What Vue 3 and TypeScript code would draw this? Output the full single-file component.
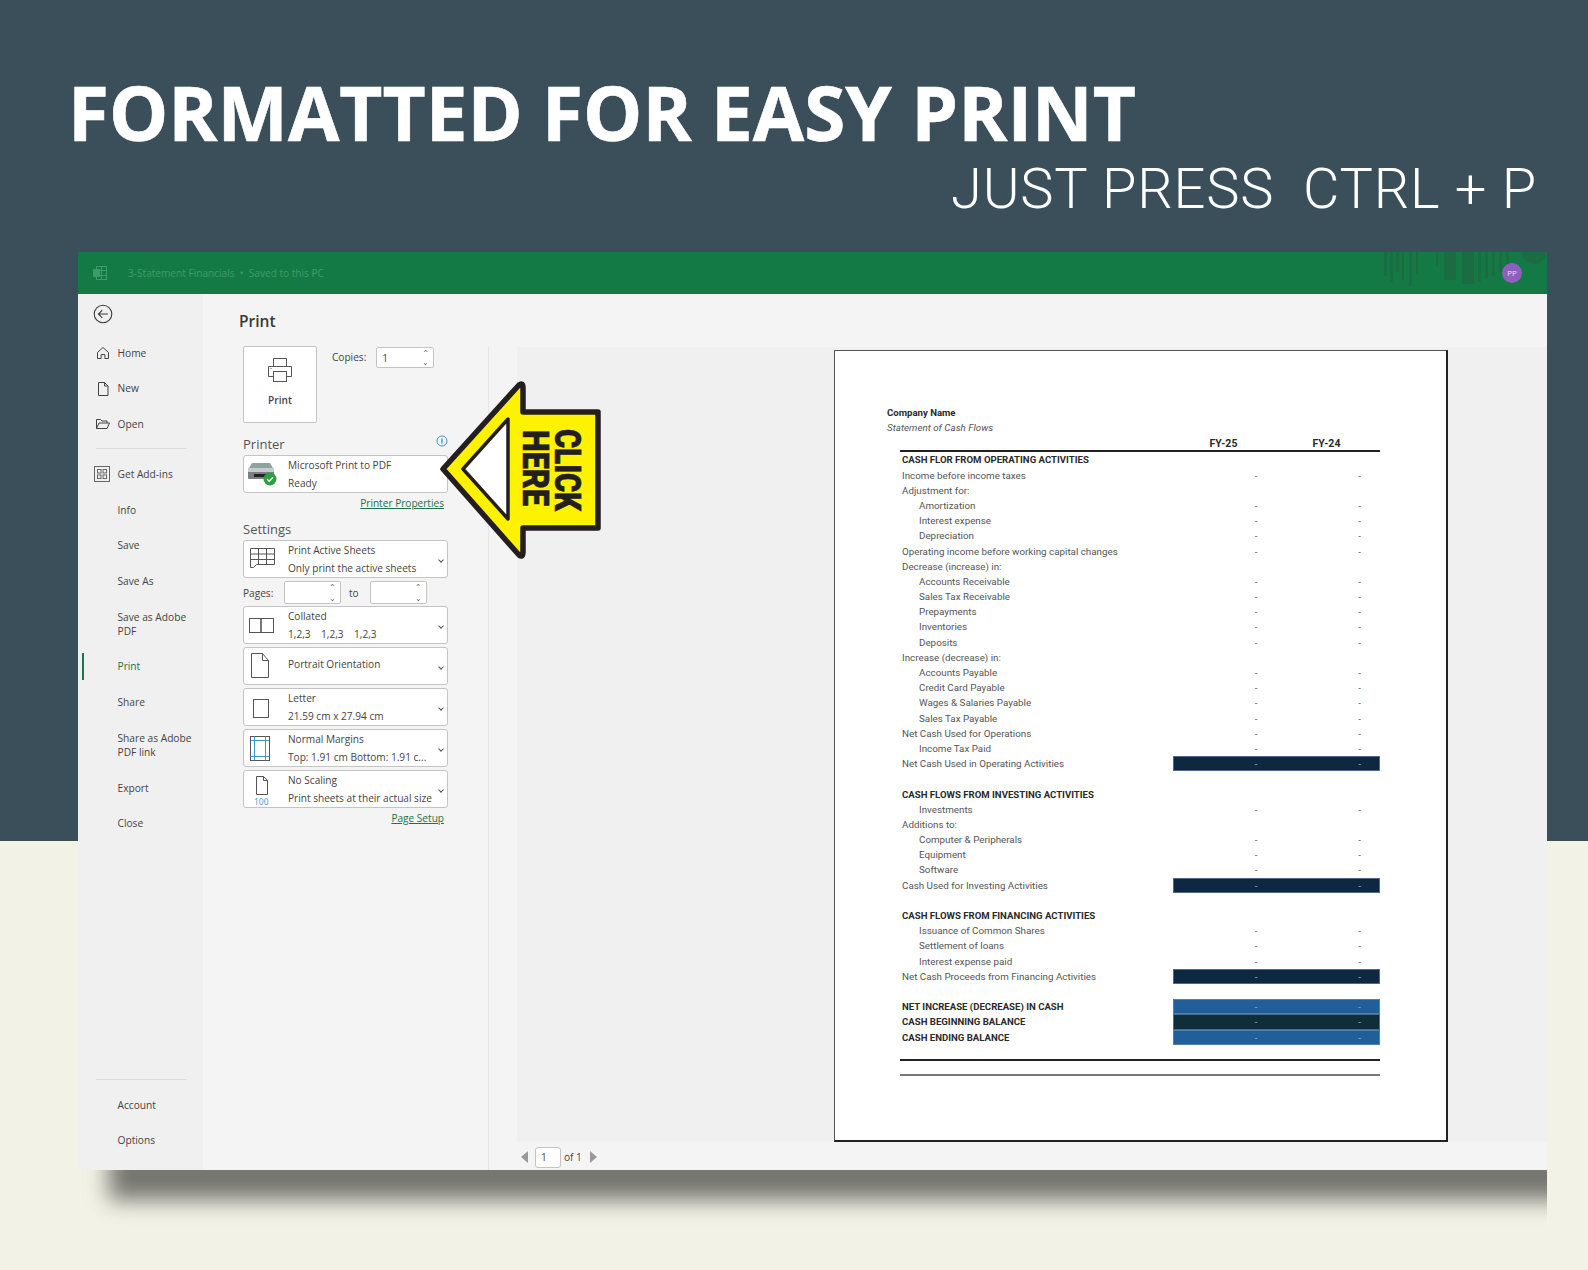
<script setup lang="ts">
interface SheetRow {
	label: string;
	kind?: "head" | "total" | "blank";
	indent?: boolean;
	dash?: boolean;
	bar?: "navy" | "blue" | "teal";
}

interface PrintOption {
	icon: string;
	name: string;
	sub?: string;
}

const navTop = ["Home", "New", "Open"];
const navMid = [
	"Get Add-ins",
	"Info",
	"Save",
	"Save As",
	"Save as Adobe PDF",
	"Print",
	"Share",
	"Share as Adobe PDF link",
	"Export",
	"Close",
];

const optionsA: PrintOption[] = [
	{ icon: "sheet", name: "Print Active Sheets", sub: "Only print the active sheets" },
];
const optionsB: PrintOption[] = [
	{ icon: "collate", name: "Collated", sub: "1,2,3    1,2,3    1,2,3" },
	{ icon: "portrait", name: "Portrait Orientation" },
	{ icon: "letter", name: "Letter", sub: "21.59 cm x 27.94 cm" },
	{ icon: "margins", name: "Normal Margins", sub: "Top: 1.91 cm Bottom: 1.91 c..." },
	{ icon: "scaling", name: "No Scaling", sub: "Print sheets at their actual size" },
];

const rows: SheetRow[] = [
	{ label: "CASH FLOR FROM OPERATING ACTIVITIES", kind: "head" },
	{ label: "Income before income taxes", dash: true },
	{ label: "Adjustment for:" },
	{ label: "Amortization", indent: true, dash: true },
	{ label: "Interest expense", indent: true, dash: true },
	{ label: "Depreciation", indent: true, dash: true },
	{ label: "Operating income before working capital changes", dash: true },
	{ label: "Decrease (increase) in:" },
	{ label: "Accounts Receivable", indent: true, dash: true },
	{ label: "Sales Tax Receivable", indent: true, dash: true },
	{ label: "Prepayments", indent: true, dash: true },
	{ label: "Inventories", indent: true, dash: true },
	{ label: "Deposits", indent: true, dash: true },
	{ label: "Increase (decrease) in:" },
	{ label: "Accounts Payable", indent: true, dash: true },
	{ label: "Credit Card Payable", indent: true, dash: true },
	{ label: "Wages & Salaries Payable", indent: true, dash: true },
	{ label: "Sales Tax Payable", indent: true, dash: true },
	{ label: "Net Cash Used for Operations", dash: true },
	{ label: "Income Tax Paid", indent: true, dash: true },
	{ label: "Net Cash Used in Operating Activities", dash: true, bar: "navy" },
	{ label: "", kind: "blank" },
	{ label: "CASH FLOWS FROM INVESTING ACTIVITIES", kind: "head" },
	{ label: "Investments", indent: true, dash: true },
	{ label: "Additions to:" },
	{ label: "Computer & Peripherals", indent: true, dash: true },
	{ label: "Equipment", indent: true, dash: true },
	{ label: "Software", indent: true, dash: true },
	{ label: "Cash Used for Investing Activities", dash: true, bar: "navy" },
	{ label: "", kind: "blank" },
	{ label: "CASH FLOWS FROM FINANCING ACTIVITIES", kind: "head" },
	{ label: "Issuance of Common Shares", indent: true, dash: true },
	{ label: "Settlement of loans", indent: true, dash: true },
	{ label: "Interest expense paid", indent: true, dash: true },
	{ label: "Net Cash Proceeds from Financing Activities", dash: true, bar: "navy" },
	{ label: "", kind: "blank" },
	{ label: "NET INCREASE (DECREASE) IN CASH", kind: "head", dash: true, bar: "blue" },
	{ label: "CASH BEGINNING BALANCE", kind: "head", dash: true, bar: "teal" },
	{ label: "CASH ENDING BALANCE", kind: "head", dash: true, bar: "blue" },
];

const stripes = [
	[0, 3, 24], [6, 3, 30], [12, 3, 20], [18, 2, 28], [25, 3, 34], [32, 2, 22],
	[52, 2, 14], [60, 12, 28], [78, 12, 32], [94, 3, 30], [101, 3, 26], [108, 3, 24], [115, 3, 20], [122, 3, 14],
];
</script>

<template>
	<div class="page">
		<header class="hero">
			<h1 class="hero-title">FORMATTED FOR EASY PRINT</h1>
			<p class="hero-sub">JUST PRESS&nbsp; CTRL + P</p>
		</header>

		<section class="window">
			<div class="titlebar">
				<svg class="xl-icon" width="16" height="16" viewBox="0 0 16 16" fill="none" stroke="#3f9a68" stroke-width="1">
					<rect x="4.5" y="1.5" width="10" height="13" />
					<path d="M4.5 5.5h10M4.5 10.5h10M9.5 1.5v13" />
					<rect x="1" y="4" width="7" height="8" fill="#3f9a68" stroke="none" />
				</svg>
				<span class="doc-title">3-Statement Financials &nbsp;•&nbsp; Saved to this PC</span>
				<div class="deco">
					<i v-for="(s, i) in stripes" :key="i" class="stripe" :style="{ left: s[0] + 'px', width: s[1] + 'px', height: s[2] + 'px' }"></i>
				</div>
				<span class="deco-arc"></span>
				<span class="avatar">PP</span>
			</div>

			<div class="body">
				<nav class="nav">
					<svg class="back" width="20" height="20" viewBox="0 0 20 20" fill="none" stroke="#3d3d3d" stroke-width="1.1">
						<circle cx="10" cy="10" r="8.8" />
						<path d="M15 10H5.5M9.3 6.2 5.4 10l3.9 3.8" />
					</svg>

					<a v-for="item in navTop" :key="item" class="nav-item">
						<svg v-if="item === 'Home'" class="nav-icon" width="16" height="16" viewBox="0 0 16 16" fill="none" stroke="#444" stroke-width="1">
							<path d="M2.5 7.5 8 2.5l5.5 5v6h-3.6V9.6H6.1v3.9H2.5z" />
						</svg>
						<svg v-else-if="item === 'New'" class="nav-icon" width="16" height="16" viewBox="0 0 16 16" fill="none" stroke="#444" stroke-width="1">
							<path d="M3.5 1.5h6l3.5 3.5v9.5H3.5zM9.5 1.5V5H13" />
						</svg>
						<svg v-else class="nav-icon" width="16" height="16" viewBox="0 0 16 16" fill="none" stroke="#444" stroke-width="1">
							<path d="M1.5 12.5v-9h4l1.5 1.5h5v2M1.5 12.5l2.5-5.5h10.5l-2.5 5.5z" />
						</svg>
						{{ item }}
					</a>

					<hr class="nav-sep" />

					<a v-for="item in navMid" :key="item" class="nav-item" :class="{ 'nav-item--active': item === 'Print', 'nav-item--two': item.length > 14 }">
						<svg v-if="item === 'Get Add-ins'" class="nav-icon nav-icon--wide" width="16" height="16" viewBox="0 0 16 16" fill="none" stroke="#666" stroke-width="1">
							<rect x="0.5" y="0.5" width="15" height="15" />
							<rect x="3.5" y="3.5" width="3.5" height="3.5" />
							<rect x="9" y="3.5" width="3.5" height="3.5" />
							<rect x="3.5" y="9" width="3.5" height="3.5" />
							<rect x="9" y="9" width="3.5" height="3.5" />
						</svg>
						<span class="nav-label">{{ item }}</span>
					</a>

					<div class="nav-bottom">
						<hr class="nav-sep" />
						<a class="nav-item">Account</a>
						<a class="nav-item">Options</a>
					</div>
				</nav>

				<div class="panel">
					<h2 class="panel-title">Print</h2>

					<div class="print-row">
						<button class="print-btn">
							<svg width="28" height="28" viewBox="0 0 28 28" fill="none" stroke="#555" stroke-width="1">
								<path d="M7.5 10.5v-8h13v8" />
								<path d="M7.5 20.5h-5v-10h23v10h-5" />
								<rect x="7.5" y="15.5" width="13" height="10" />
								<path d="M4.5 12.5h1" />
							</svg>
							<span>Print</span>
						</button>
						<label class="copies">Copies:</label>
						<div class="spin spin--copies">
							<span class="spin-value">1</span>
							<span class="spin-arrows"><b>⌃</b><b class="down">⌃</b></span>
						</div>
					</div>

					<div class="group-head">
						<h3 class="group-title">Printer</h3>
						<svg class="info" width="12" height="12" viewBox="0 0 12 12" fill="none" stroke="#3f97d2" stroke-width="1">
							<circle cx="6" cy="6" r="5" />
							<path d="M6 3.4v5.2" stroke-width="1.4" />
						</svg>
					</div>
					<div class="select">
						<svg class="select-icon" width="30" height="26" viewBox="0 0 30 26">
							<path d="M2 8 5 3h18l3 5z" fill="#8fa3a0" />
							<rect x="1" y="8" width="26" height="11" rx="1" fill="#7a8082" />
							<rect x="1" y="8" width="26" height="4" fill="#c6ccc9" />
							<rect x="7" y="14" width="14" height="3" fill="#1f2426" />
							<circle cx="23" cy="19" r="6.5" fill="#2e9e3f" />
							<path d="m20 19 2.2 2.2 3.8-4" fill="none" stroke="#fff" stroke-width="1.4" />
						</svg>
						<div class="select-text">
							<span>Microsoft Print to PDF</span>
							<span>Ready</span>
						</div>
					</div>
					<a class="link">Printer Properties</a>

					<h3 class="group-title group-title--settings">Settings</h3>
					<div v-for="opt in optionsA" :key="opt.name" class="select">
						<svg class="select-icon" width="30" height="26" viewBox="0 0 30 26" fill="none" stroke="#555" stroke-width="1">
							<path d="M3.5 3.5h24v16h-18l-3 3h-3zM3.5 9h24M3.5 14.5h24M11.5 3.5v16M19.5 3.5v16" />
						</svg>
						<div class="select-text">
							<span>{{ opt.name }}</span>
							<span>{{ opt.sub }}</span>
						</div>
						<span class="caret"></span>
					</div>

					<div class="pages">
						<span class="pages-label">Pages:</span>
						<div class="spin spin--pages">
							<span class="spin-value"></span>
							<span class="spin-arrows"><b>⌃</b><b class="down">⌃</b></span>
						</div>
						<span class="pages-to">to</span>
						<div class="spin spin--pages">
							<span class="spin-value"></span>
							<span class="spin-arrows"><b>⌃</b><b class="down">⌃</b></span>
						</div>
					</div>

					<div class="select-stack">
						<div v-for="opt in optionsB" :key="opt.name" class="select">
							<svg class="select-icon" width="30" height="28" viewBox="0 0 30 28" fill="none" stroke="#555" stroke-width="1">
								<template v-if="opt.icon === 'collate'">
									<rect x="2.5" y="7.5" width="24" height="14" />
									<path d="M14 7v15" stroke-width="1.6" />
								</template>
								<template v-else-if="opt.icon === 'portrait'">
									<path d="M4.5 1.5h11l6 7v17h-17zM15.5 1.5v7h6" />
								</template>
								<template v-else-if="opt.icon === 'letter'">
									<rect x="6.5" y="6.5" width="15" height="18" />
								</template>
								<template v-else-if="opt.icon === 'margins'">
									<rect x="3.5" y="2.5" width="19" height="24" />
									<path d="M3.5 6.5h19M3.5 22.5h19M7.5 2.5v24M18.5 2.5v24" stroke="#3f97d2" />
								</template>
								<template v-else>
									<path d="M9.5 1.5h7l4 4v14h-11zM16.5 1.5v4h4" />
								</template>
							</svg>
							<span v-if="opt.icon === 'scaling'" class="scale-100">100</span>
							<div class="select-text" :class="{ 'select-text--one': !opt.sub }">
								<span>{{ opt.name }}</span>
								<span v-if="opt.sub" class="keep-space">{{ opt.sub }}</span>
							</div>
							<span class="caret"></span>
						</div>
					</div>
					<a class="link">Page Setup</a>
				</div>

				<div class="preview">
					<div class="preview-canvas">
						<div class="sheet">
							<p class="company">Company Name</p>
							<p class="statement">Statement of Cash Flows</p>
							<div class="table">
								<div class="row row--years">
									<span class="cell-label"></span>
									<span class="cell-year">FY-25</span>
									<span class="cell-year">FY-24</span>
								</div>
								<div
									v-for="(r, i) in rows"
									:key="i"
									class="row"
									:class="{ 'row--head': r.kind === 'head', 'row--indent': r.indent }"
								>
									<span class="cell-label">{{ r.label }}</span>
									<div class="cells" :class="r.bar ? 'cells--' + r.bar : ''">
										<span class="cell-dash">{{ r.dash ? "-" : "" }}</span>
										<span class="cell-dash">{{ r.dash ? "-" : "" }}</span>
									</div>
								</div>
								<div class="rule rule--dark"></div>
								<div class="rule rule--gray"></div>
							</div>
						</div>
					</div>
					<div class="pager">
						<span class="tri tri--left"></span>
						<span class="pager-box">1</span>
						<span class="pager-of">of 1</span>
						<span class="tri tri--right"></span>
					</div>
				</div>
			</div>

			<!-- callout over the printer dropdown -->
			<svg class="callout" width="168" height="184" viewBox="0 0 168 184">
				<path
					d="M5 91 81 7Q85 4 85 10V34H160V150H85V174Q85 180 81 177Z"
					fill="#fff200"
					stroke="#231f20"
					stroke-width="5.5"
					stroke-linejoin="round"
				/>
				<path d="M25 91 70 41V141Z" fill="#fff" stroke="#231f20" stroke-width="3.5" stroke-linejoin="round" />
				<text class="callout-text" transform="translate(117 51) rotate(90)" textLength="82" lengthAdjust="spacingAndGlyphs">CLICK</text>
				<text class="callout-text" transform="translate(85 52) rotate(90)" textLength="76" lengthAdjust="spacingAndGlyphs">HERE</text>
			</svg>

			<div class="shadow-clip"><div class="shadow"></div></div>
		</section>
	</div>
</template>

<style>
html,
body {
	margin: 0;
	background: #f2f2e6;
}
</style>

<style scoped>
.page {
	width: 1588px;
	height: 1270px;
	overflow: hidden;
	background: linear-gradient(#3a4f5a 0 841px, #f2f2e6 841px);
	font-family: "Open Sans", "Liberation Sans", sans-serif;
}

.hero {
	height: 252px;
	box-sizing: border-box;
	padding: 64px 51px 0 68px;
	color: #fff;
}

.hero-title {
	margin: 0;
	font-size: 74.6px;
	line-height: 96px;
	font-weight: 700;
	-webkit-text-stroke: 0.6px #fff;
	white-space: nowrap;
}

.hero-sub {
	margin: -11px 0 0;
	font-family: Roboto, "Liberation Sans", sans-serif;
	font-size: 56px;
	line-height: 80px;
	font-weight: 300;
	letter-spacing: 0.8px;
	text-align: right;
	white-space: nowrap;
}

.window {
	position: relative;
	margin-left: 78px;
	width: 1469px;
	height: 918px;
	font-size: 10.1px;
	color: #444;
}

.titlebar {
	position: relative;
	height: 42px;
	background: #147a45;
	display: flex;
	align-items: center;
	padding-left: 14px;
}

.xl-icon {
	flex: none;
}

.doc-title {
	margin-left: 20px;
	color: #3f9a68;
	font-size: 10.1px;
}

.deco {
	position: absolute;
	left: 1306px;
	top: 0;
	width: 140px;
	height: 42px;
}

.stripe {
	position: absolute;
	top: 0;
	background: #1c6c43;
}

.deco-arc {
	position: absolute;
	left: 1444px;
	top: -12px;
	width: 24px;
	height: 24px;
	border-radius: 50%;
	background: #1c6c43;
	clip-path: inset(12px 0 0 0);
}

.avatar {
	position: absolute;
	left: 1424px;
	top: 11px;
	width: 20px;
	height: 20px;
	border-radius: 50%;
	background: #8f5fc0;
	color: #e9def5;
	font-size: 8px;
	line-height: 20px;
	text-align: center;
}

.body {
	display: grid;
	grid-template-columns: 125px 286px 1fr;
	height: 876px;
	background: #f4f4f4;
}

.nav {
	background: #f0f0f0;
	display: flex;
	flex-direction: column;
	padding-top: 10px;
	position: relative;
	font-size: 10.2px;
}

.back {
	margin: 0 0 11px 15px;
	flex: none;
}

.nav-item {
	position: relative;
	min-height: 35.6px;
	display: flex;
	align-items: center;
	padding-left: 39.5px;
	padding-right: 6px;
	line-height: 14px;
	flex: none;
}

.nav-item--two {
	min-height: 50px;
}

.nav-item--active {
	color: #217346;
}

.nav-item--active::before {
	content: "";
	position: absolute;
	left: 4px;
	top: 4px;
	bottom: 4px;
	width: 2px;
	background: #217346;
}

.nav-icon {
	position: absolute;
	left: 17px;
	top: 10px;
}

.nav-icon--wide {
	left: 16px;
}

.nav-sep {
	margin: 6px 16px 7.5px 18px;
	border: 0;
	height: 1px;
	background: #dcdcdc;
}

.nav-bottom {
	margin-top: auto;
	padding-bottom: 12px;
}

.nav-bottom .nav-sep {
	margin-bottom: 7px;
}

.panel {
	position: relative;
	padding: 16px 41px 0 40px;
	display: flex;
	flex-direction: column;
}

.panel::after {
	content: "";
	position: absolute;
	right: 0;
	top: 52px;
	bottom: 0;
	width: 1px;
	background: #e6e6e6;
}

.panel-title {
	margin: 0 0 0 -4px;
	font-size: 15.5px;
	line-height: 22px;
	font-weight: 600;
	color: #3a3a3a;
}

.print-row {
	display: flex;
	align-items: flex-start;
	margin-top: 14px;
	height: 77px;
}

.print-btn {
	width: 74px;
	height: 77px;
	box-sizing: border-box;
	padding: 9px 0 0;
	background: #fff;
	border: 1px solid #c4c4c4;
	border-radius: 2px;
	display: flex;
	flex-direction: column;
	align-items: center;
	gap: 9px;
	font: 600 10.1px "Open Sans", sans-serif;
	color: #444;
}

.copies {
	margin: 4px 0 0 15px;
	line-height: 14px;
}

.spin {
	position: relative;
	background: #fff;
	border: 1px solid #c4c4c4;
	border-radius: 2px;
	box-sizing: border-box;
	flex: none;
}

.spin--copies {
	margin-left: 10px;
	margin-top: 1px;
	width: 58px;
	height: 21px;
}

.spin--pages {
	width: 57px;
	height: 23px;
}

.spin-value {
	position: absolute;
	left: 5px;
	top: 3px;
	line-height: 14px;
}

.spin-arrows {
	position: absolute;
	right: 3px;
	top: 0;
	bottom: 0;
	width: 8px;
}

.spin-arrows b {
	position: absolute;
	left: 0;
	top: 2px;
	font: 400 8px/8px "DejaVu Sans", sans-serif;
	color: #666;
}

.spin-arrows b.down {
	top: auto;
	bottom: 2px;
	transform: rotate(180deg);
}

.group-head {
	margin-top: 12px;
	display: flex;
	justify-content: space-between;
	align-items: flex-start;
}

.group-title {
	margin: 0;
	font-size: 13px;
	line-height: 18px;
	font-weight: 400;
	color: #555;
}

.group-title--settings {
	margin-top: 10px;
	margin-bottom: 2px;
}

.select {
	position: relative;
	flex: none;
	height: 38px;
	box-sizing: border-box;
	background: #fff;
	border: 1px solid #c4c4c4;
	border-radius: 3px;
	display: flex;
	align-items: center;
}

.group-head + .select {
	margin-top: 2px;
}

.select-icon {
	position: absolute;
	left: 3px;
	top: 4px;
}

.select-text {
	margin-left: 44px;
	display: flex;
	flex-direction: column;
	gap: 4px;
	line-height: 14px;
	white-space: nowrap;
}

.select-text--one {
	margin-top: -4px;
}

.keep-space {
	white-space: pre;
}

.scale-100 {
	position: absolute;
	left: 10px;
	bottom: 1px;
	font-size: 8.5px;
	line-height: 9px;
	color: #3f97d2;
}

.caret {
	position: absolute;
	right: 4px;
	top: 50%;
	width: 3px;
	height: 3px;
	margin-top: -1px;
	border-right: 1px solid #555;
	border-bottom: 1px solid #555;
	transform: rotate(45deg);
}

.pages {
	display: flex;
	align-items: center;
	height: 23px;
	margin-top: 3px;
}

.pages-label {
	width: 41px;
}

.pages-to {
	margin: 0 11px 0 8px;
}

.select-stack {
	margin-top: 2px;
	display: flex;
	flex-direction: column;
	gap: 3px;
}

.link {
	align-self: flex-end;
	margin: 3px 4px 0 0;
	color: #217346;
	text-decoration: underline;
	line-height: 14px;
}

.preview {
	display: flex;
	flex-direction: column;
	padding: 53px 0 0 28px;
}

.preview-canvas {
	background: #f0f0f0;
	height: 795px;
	padding: 3px 0 0 317px;
	box-sizing: border-box;
}

.sheet {
	width: 614px;
	height: 792px;
	box-sizing: border-box;
	background: #fff;
	border: 1px solid #555;
	border-right: 2px solid #222;
	border-bottom: 2px solid #222;
	padding: 54px 0 0 52px;
	font-family: Roboto, "Liberation Sans", sans-serif;
	font-size: 9.8px;
	color: #555;
}

.company,
.statement {
	margin: 0;
	line-height: 15.2px;
}

.company {
	font-weight: 700;
	color: #2a2a2a;
	font-size: 9.6px;
}

.statement {
	font-style: italic;
}

.table {
	margin-left: 13px;
	width: 480px;
}

.row {
	display: flex;
	height: 15.2px;
	line-height: 15.2px;
	white-space: nowrap;
}

.row--years {
	font-weight: 700;
	color: #2a2a2a;
	border-bottom: 2px solid #222;
	height: 15px;
	line-height: 17px;
	box-sizing: content-box;
}

.row--head {
	font-weight: 700;
	color: #2a2a2a;
	font-size: 9.6px;
}

.row--indent .cell-label {
	padding-left: 19px;
}

.cell-label {
	flex: 1;
	box-sizing: border-box;
	padding-left: 2px;
}

.cell-year {
	width: 103px;
	box-sizing: border-box;
	padding-right: 4px;
	text-align: center;
	font-size: 10.5px;
}

.cells {
	display: flex;
	width: 207px;
	flex: none;
}

.cells--navy,
.cells--blue,
.cells--teal {
	color: #9fb3c8;
	outline: 1px solid rgba(120, 150, 185, 0.6);
	outline-offset: -1px;
}

.cells--navy {
	background: #0e2841;
}

.cells--blue {
	background: #215f9a;
}

.cells--teal {
	background: #0f2e3a;
}

.cell-dash {
	width: 103.5px;
	box-sizing: border-box;
	padding-right: 19px;
	text-align: right;
	font-weight: 400;
}

.rule {
	height: 2px;
}

.rule--dark {
	margin-top: 14px;
	background: #222;
}

.rule--gray {
	margin-top: 13.5px;
	background: #777;
}

.pager {
	display: flex;
	align-items: center;
	height: 24px;
	margin-top: 3px;
}

.tri {
	width: 0;
	height: 0;
	border-top: 6px solid transparent;
	border-bottom: 6px solid transparent;
}

.tri--left {
	margin-left: 4px;
	border-right: 7px solid #9a9a9a;
}

.tri--right {
	margin-left: 8px;
	border-left: 7px solid #9a9a9a;
}

.pager-box {
	margin-left: 7px;
	width: 26px;
	height: 21px;
	box-sizing: border-box;
	padding-left: 5px;
	line-height: 19px;
	background: #fff;
	border: 1px solid #c4c4c4;
	border-radius: 3px;
}

.pager-of {
	margin-left: 3px;
}

.callout {
	position: absolute;
	left: 360px;
	top: 126px;
}

.callout-text {
	font: 900 37px Roboto, "Liberation Sans", sans-serif;
	fill: #231f20;
	stroke: #231f20;
	stroke-width: 0.6px;
}

.shadow-clip {
	position: absolute;
	left: 0;
	right: 0;
	top: 100%;
	height: 70px;
	overflow: hidden;
}

.shadow {
	position: absolute;
	left: 31px;
	right: -30px;
	top: -20px;
	height: 50px;
	background: #75756f;
	filter: blur(11px);
}
</style>
